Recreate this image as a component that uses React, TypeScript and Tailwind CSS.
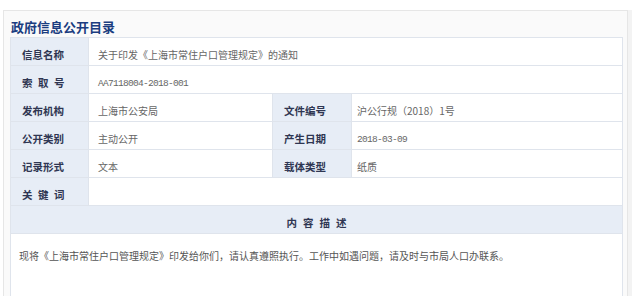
import React from "react";

const cjk = { fontFamily: '"Noto Sans CJK SC", "Noto Sans", sans-serif' };
const mono = { fontFamily: '"Liberation Mono", "Noto Sans CJK SC", monospace' };

function Label({ children, spaced }: { children: React.ReactNode; spaced?: boolean }) {
  return (
    <td className="h-[28px] border border-[#dfe4ec] bg-[#e7edf6] pl-[11px] align-middle">
      <span className={`text-[10.5px] font-bold text-[#2f3652] leading-none ${spaced ? "tracking-[5.5px]" : ""}`}>{children}</span>
    </td>
  );
}

function Value({ children, colSpan, isMono, pl = "pl-[9px]" }: { children?: React.ReactNode; colSpan?: number; isMono?: boolean; pl?: string }) {
  return (
    <td colSpan={colSpan} className={`h-[28px] border border-[#dfe4ec] bg-white ${pl} align-middle`}>
      {isMono ? (
        <span style={mono} className="text-[9.5px] tracking-[-0.7px] text-[#666]">{children}</span>
      ) : (
        <span className="text-[10px] text-[#666]">{children}</span>
      )}
    </td>
  );
}

export default function App() {
  return (
    <div style={cjk} className="w-[640px] h-[296px] bg-white overflow-hidden flex items-start">
      <div className="ml-[3px] mt-[10px] w-[625px] shrink-0 border-l border-t border-r border-[#e6e6e6] bg-[#fafafa] flex flex-col">
        <div className="h-[26px] shrink-0 pl-[7px] flex items-center pt-[4px]">
          <span className="text-[13px] font-bold text-[#1b3d80] leading-none">政府信息公开目录</span>
        </div>
        <div className="pl-[6px] shrink-0">
          <table className="border-collapse table-fixed w-[612px]">
            <colgroup>
              <col className="w-[78px]" />
              <col className="w-[184px]" />
              <col className="w-[79px]" />
              <col className="w-[271px]" />
            </colgroup>
            <tbody>
              <tr>
                <Label>信息名称</Label>
                <Value colSpan={3}>关于印发《上海市常住户口管理规定》的通知</Value>
              </tr>
              <tr>
                <Label spaced>索取号</Label>
                <Value colSpan={3} isMono>AA7118004-2018-001</Value>
              </tr>
              <tr>
                <Label>发布机构</Label>
                <Value>上海市公安局</Value>
                <Label>文件编号</Label>
                <Value pl="pl-[5px]">沪公行规（2018）1号</Value>
              </tr>
              <tr>
                <Label>公开类别</Label>
                <Value>主动公开</Value>
                <Label>产生日期</Label>
                <Value pl="pl-[5px]" isMono>2018-03-09</Value>
              </tr>
              <tr>
                <Label>记录形式</Label>
                <Value>文本</Value>
                <Label>载体类型</Label>
                <Value pl="pl-[5px]">纸质</Value>
              </tr>
              <tr>
                <Label spaced>关键词</Label>
                <Value colSpan={3}></Value>
              </tr>
              <tr>
                <td colSpan={4} className="h-[28px] border border-[#dfe4ec] bg-[#e7edf6] text-center align-middle">
                  <span className="text-[10.5px] font-bold text-[#2f3652] tracking-[6px] pl-[6px]">内容描述</span>
                </td>
              </tr>
              <tr>
                <td colSpan={4} className="h-[80px] border border-[#dfe4ec] bg-white pl-[8px] pt-[7px] align-top">
                  <span className="text-[10px] text-[#555]">现将《上海市常住户口管理规定》印发给你们，请认真遵照执行。工作中如遇问题，请及时与市局人口办联系。</span>
                </td>
              </tr>
            </tbody>
          </table>
        </div>
      </div>
      <div className="mt-[10px] w-[4px] h-[286px] bg-[#f3f3f3]" />
    </div>
  );
}
